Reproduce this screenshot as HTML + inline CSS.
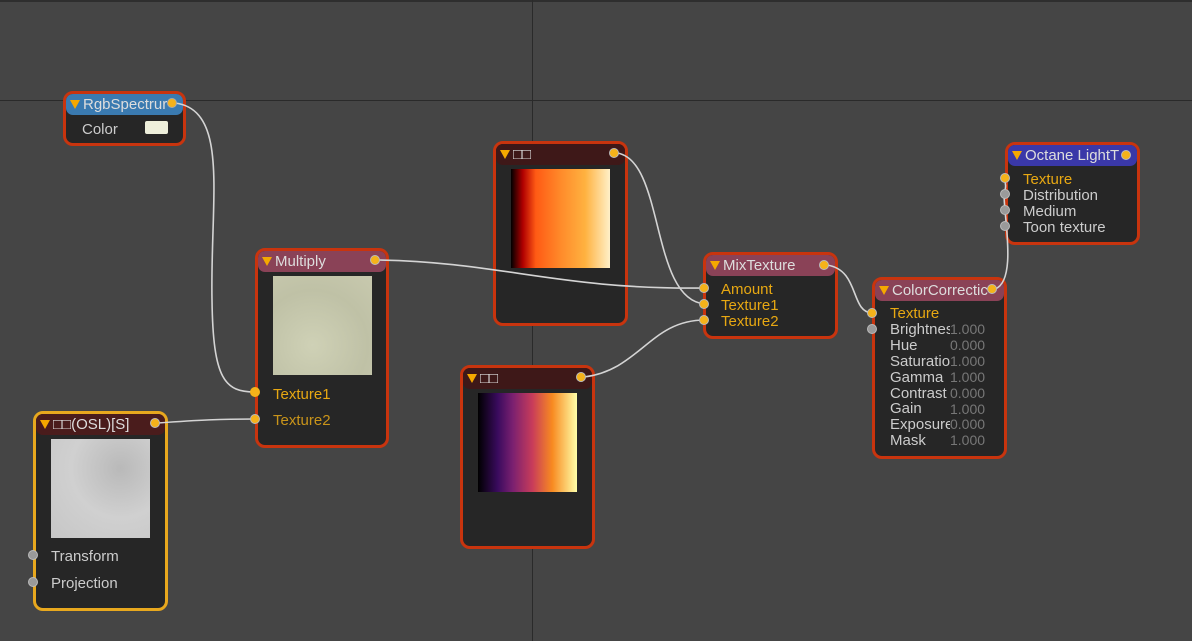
<!DOCTYPE html>
<html><head><meta charset="utf-8"><style>
body{margin:0;width:1192px;height:641px;background:#454545;position:relative;overflow:hidden;font-family:"Liberation Sans","Noto Sans CJK SC",sans-serif;}
.l{position:absolute;background:#2e2e2e}
.n{position:absolute;background:#262626;border:3px solid #c8340e;border-radius:10px;box-sizing:border-box}
.h{position:absolute;left:0px;right:0px;top:0px;height:21px;border-radius:7px;color:#ddd;font-size:15px;line-height:21px;padding-left:17px;white-space:nowrap;overflow:hidden}
.h:before{content:"";position:absolute;left:4px;top:6px;border-left:5px solid transparent;border-right:5px solid transparent;border-top:9px solid #f5a800}
.p{position:absolute;width:8px;height:8px;border-radius:50%;background:#f5b21a;border:1.5px solid #bbb;box-sizing:content-box;z-index:3}
.g{background:#9a9a9a}
.t{position:absolute;font-size:15px;white-space:nowrap;color:#ccc}
.o{color:#e8a812}
.v{position:absolute;font-size:14px;color:#777}
svg{z-index:2}
</style></head><body>
<div class="l" style="left:0;top:0;width:1192px;height:2px"></div>
<div class="l" style="left:0;top:100px;width:1192px;height:1px;background:#2a2a2a"></div>
<div class="l" style="left:532px;top:0;width:1px;height:641px;background:#2a2a2a"></div>

<svg style="position:absolute;left:0;top:0" width="1192" height="641" fill="none" stroke="#d4d4d4" stroke-width="1.6">
<path d="M175,103 C230,110 210,200 212,300 C213,380 225,392 255,392"/>
<path d="M158,423 C200,420 220,419 255,419"/>
<path d="M379,260 C500,262 560,290 705,288"/>
<path d="M617,153 C665,160 650,300 705,304"/>
<path d="M584,377 C640,370 650,320 705,320"/>
<path d="M827,265 C860,270 850,312 872,313"/>
<path d="M995,289 C1020,280 1000,200 1005,190 C1008,180 1000,178 1006,178"/>
</svg>

<!-- RgbSpectrum -->
<div class="n" style="left:63px;top:91px;width:123px;height:55px">
<div class="h" style="background:#3a7ab0">RgbSpectrur</div>
<div class="t" style="left:16px;top:27px">Color</div>
<div style="position:absolute;left:79px;top:27px;width:23px;height:13px;background:#eeefdb;border-radius:2px"></div>
</div>
<div class="p" style="left:167px;top:98px;border-color:#aaa"></div>

<!-- Multiply -->
<div class="n" style="left:255px;top:248px;width:134px;height:200px">
<div class="h" style="background:#8a4257">Multiply</div>
<div style="position:absolute;left:15px;top:25px;width:99px;height:99px;background:radial-gradient(circle at 40% 70%,#cfd1b6,#bfc1a6 60%,#c8c9ae)"></div>
<div class="t o" style="left:15px;top:135px">Texture1</div>
<div class="t o" style="left:15px;top:161px;color:#c9941a">Texture2</div>
</div>
<div class="p" style="left:370px;top:255px"></div>
<div class="p" style="left:250px;top:387px;border-color:#f5b21a"></div>
<div class="p" style="left:250px;top:414px"></div>

<!-- OSL -->
<div class="n" style="left:33px;top:411px;width:135px;height:200px;border-color:#e8a81e">
<div class="h" style="background:#4a1c1c">□□(OSL)[S]</div>
<div style="position:absolute;left:15px;top:25px;width:99px;height:99px;background:radial-gradient(circle at 70% 30%,#b9b9b9,#d0d0d0 50%,#c6c6c6)"></div>
<div class="t" style="left:15px;top:134px">Transform</div>
<div class="t" style="left:15px;top:161px">Projection</div>
</div>
<div class="p" style="left:150px;top:418px"></div>
<div class="p g" style="left:28px;top:550px"></div>
<div class="p g" style="left:28px;top:577px"></div>

<!-- gradient 1 -->
<div class="n" style="left:493px;top:141px;width:135px;height:185px">
<div class="h" style="background:#3e1818">□□</div>
<div style="position:absolute;left:15px;top:25px;width:99px;height:99px;background:linear-gradient(90deg,#000 0%,#b00000 12%,#ff5a14 25%,#ff8a2a 50%,#ffb240 75%,#fff0c8 100%)"></div>
</div>
<div class="p" style="left:609px;top:148px"></div>

<!-- gradient 2 -->
<div class="n" style="left:460px;top:365px;width:135px;height:184px">
<div class="h" style="background:#3e1818">□□</div>
<div style="position:absolute;left:15px;top:25px;width:99px;height:99px;background:linear-gradient(90deg,#000 0%,#3a0b5e 20%,#7a2070 35%,#c83c5a 55%,#f88a20 75%,#ffffa8 100%)"></div>
</div>
<div class="p" style="left:576px;top:372px"></div>

<!-- MixTexture -->
<div class="n" style="left:703px;top:252px;width:135px;height:87px">
<div class="h" style="background:#8a4257">MixTexture</div>
<div class="t o" style="left:15px;top:27px;line-height:16px">Amount<br>Texture1<br>Texture2</div>
</div>
<div class="p" style="left:819px;top:260px"></div>
<div class="p" style="left:699px;top:283px"></div>
<div class="p" style="left:699px;top:299px"></div>
<div class="p" style="left:699px;top:315px"></div>

<!-- ColorCorrection -->
<div class="n" style="left:872px;top:277px;width:135px;height:182px">
<div class="h" style="background:#8a4257">ColorCorrectic</div>
<div class="t" style="left:15px;top:26px;line-height:15.9px;width:60px;overflow:hidden"><span class="o">Texture</span><br>Brightness<br>Hue<br>Saturation<br>Gamma<br>Contrast<br>Gain<br>Exposure<br>Mask</div>
<div class="v" style="left:75px;top:42px;line-height:15.9px">1.000<br>0.000<br>1.000<br>1.000<br>0.000<br>1.000<br>0.000<br>1.000</div>
</div>
<div class="p" style="left:987px;top:284px"></div>
<div class="p" style="left:867px;top:308px"></div>
<div class="p g" style="left:867px;top:324px"></div>

<!-- Octane -->
<div class="n" style="left:1005px;top:142px;width:135px;height:103px">
<div class="h" style="background:#3a38a8">Octane LightT</div>
<div class="t" style="left:15px;top:27px;line-height:15.9px"><span class="o">Texture</span><br>Distribution<br>Medium<br>Toon texture</div>
</div>
<div class="p" style="left:1121px;top:150px"></div>
<div class="p" style="left:1000px;top:173px"></div>
<div class="p g" style="left:1000px;top:189px"></div>
<div class="p g" style="left:1000px;top:205px"></div>
<div class="p g" style="left:1000px;top:221px"></div>
</body></html>
